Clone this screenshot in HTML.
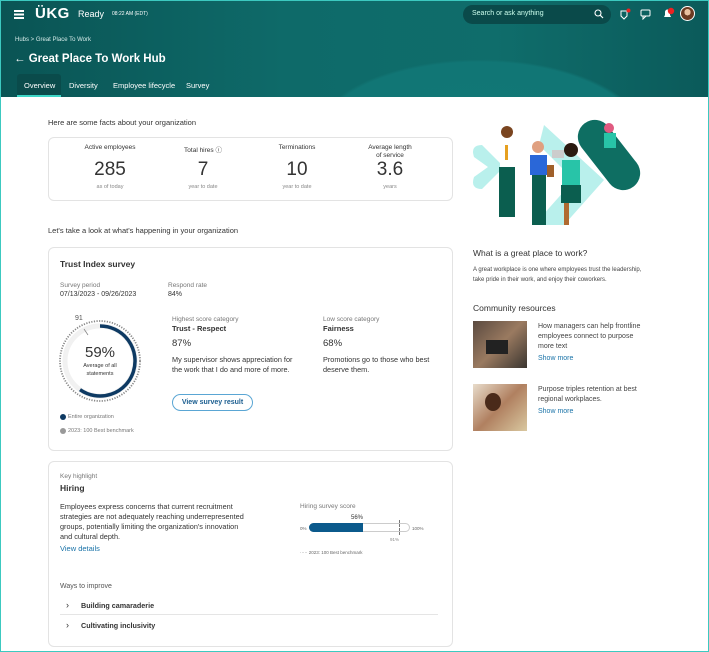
<!DOCTYPE html>
<html><head><meta charset="utf-8"><style>
*{box-sizing:border-box;margin:0;padding:0}
body{width:709px;height:652px;overflow:hidden;font-family:"Liberation Sans",sans-serif;color:#333;background:#fff;position:relative}
.frame{position:absolute;inset:0;border:1px solid #3cc9c0;pointer-events:none;z-index:9}
.hdr{position:absolute;left:0;top:0;width:709px;height:97px;background:radial-gradient(ellipse 270px 130px at 480px 140px,#117876 0%,#117675 60%,transparent 62%),linear-gradient(90deg,#0a5454 0%,#0e6a69 40%,#0f6d6b 70%,#0b5a5a 100%);color:#fff}
.a{position:absolute;white-space:nowrap}
.card{position:absolute;border:1px solid #e3e3e3;border-radius:6px;background:#fff}
.lbl{font-size:6.5px;color:#777}
.b{font-weight:bold}
.link{color:#1a73a8}
</style></head><body>
<div class="frame"></div>
<div class="hdr">
 <div class="a" style="left:14px;top:10px;width:10px;height:1.6px;background:#fff;box-shadow:0 3.5px 0 #fff,0 7px 0 #fff"></div>
 <div class="a b" style="left:35px;top:5px;font-size:15px;letter-spacing:0.5px">ÜKG</div>
 <div class="a" style="left:78px;top:9px;font-size:9px">Ready</div>
 <div class="a" style="left:112px;top:11px;font-size:5px">08:22 AM (EDT)</div>
 <div class="a" style="left:463px;top:5px;width:148px;height:19px;border-radius:10px;background:#0a4a4a"></div>
 <div class="a" style="left:472px;top:10px;font-size:7px;color:#cfe">Search or ask anything</div>
 <svg class="a" style="left:594px;top:9px" width="10" height="10" viewBox="0 0 10 10"><circle cx="4" cy="4" r="3" fill="none" stroke="#fff" stroke-width="1.1"/><path d="M6.2 6.2L9 9" stroke="#fff" stroke-width="1.2"/></svg>
 <svg class="a" style="left:619px;top:8px" width="12" height="12" viewBox="0 0 12 12"><path d="M2 3h6v5l-3 3-3-3z" fill="none" stroke="#fff" stroke-width="1"/><circle cx="9.5" cy="2.5" r="2" fill="#e22"/></svg>
 <svg class="a" style="left:640px;top:9px" width="12" height="11" viewBox="0 0 12 11"><rect x="1" y="1" width="9" height="6" rx="1" fill="none" stroke="#fff"/><path d="M3 7v3l3-3" fill="none" stroke="#fff"/></svg>
 <svg class="a" style="left:661px;top:7px" width="14" height="14" viewBox="0 0 14 14"><path d="M3 10h7l-1-2V5a2.5 2.5 0 0 0-5 0v3z" fill="#fff"/><circle cx="10" cy="4" r="3.2" fill="#e22"/></svg>
 <div class="a" style="left:680px;top:6px;width:15px;height:15px;border-radius:50%;background:radial-gradient(circle at 50% 40%,#e8c0a0 0 30%,#6b3a22 32%);border:1px solid #fff"></div>
 <div class="a" style="left:15px;top:37px;font-size:6px;color:#d7ecea">Hubs &gt; Great Place To Work</div>
 <div class="a b" style="left:14px;top:53px;font-size:11.5px">← Great Place To Work Hub</div>
 <div class="a" style="left:17px;top:74px;width:44px;height:23px;background:#0a4b4b;border-radius:3px 3px 0 0;border-bottom:2px solid #3dd6c6"></div>
 <div class="a" style="left:24px;top:81px;font-size:7.5px">Overview</div>
 <div class="a" style="left:69px;top:81px;font-size:7.5px">Diversity</div>
 <div class="a" style="left:113px;top:81px;font-size:7.5px">Employee lifecycle</div>
 <div class="a" style="left:186px;top:81px;font-size:7.5px">Survey</div>
</div>

<div class="a" style="left:48px;top:118px;font-size:7.5px">Here are some facts about your organization</div>
<div class="card" style="left:48px;top:137px;width:405px;height:64px"></div>
<div class="a" style="left:70px;top:144px;width:80px;text-align:center;font-size:6.5px">Active employees</div>
<div class="a" style="left:70px;top:159px;width:80px;text-align:center;font-size:19px">285</div>
<div class="a" style="left:70px;top:184px;width:80px;text-align:center;font-size:5.5px;color:#888">as of today</div>
<div class="a" style="left:163px;top:144px;width:80px;text-align:center;font-size:6.5px">Total hires ⓘ</div>
<div class="a" style="left:163px;top:159px;width:80px;text-align:center;font-size:19px">7</div>
<div class="a" style="left:163px;top:184px;width:80px;text-align:center;font-size:5.5px;color:#888">year to date</div>
<div class="a" style="left:257px;top:144px;width:80px;text-align:center;font-size:6.5px">Terminations</div>
<div class="a" style="left:257px;top:159px;width:80px;text-align:center;font-size:19px">10</div>
<div class="a" style="left:257px;top:184px;width:80px;text-align:center;font-size:5.5px;color:#888">year to date</div>
<div class="a" style="left:350px;top:144px;width:80px;text-align:center;font-size:6.5px;white-space:normal;line-height:8px">Average length<br>of service</div>
<div class="a" style="left:350px;top:159px;width:80px;text-align:center;font-size:19px">3.6</div>
<div class="a" style="left:350px;top:184px;width:80px;text-align:center;font-size:5.5px;color:#888">years</div>

<div class="a" style="left:48px;top:226px;font-size:7.5px">Let's take a look at what's happening in your organization</div>

<div class="card" style="left:48px;top:247px;width:405px;height:204px"></div>
<div class="a b" style="left:60px;top:259px;font-size:8.5px">Trust Index survey</div>
<div class="a lbl" style="left:60px;top:282px">Survey period</div>
<div class="a" style="left:60px;top:291px;font-size:7px">07/13/2023 - 09/26/2023</div>
<div class="a lbl" style="left:168px;top:282px">Respond rate</div>
<div class="a" style="left:168px;top:291px;font-size:7px">84%</div>
<svg class="a" style="left:55px;top:315px" width="90" height="92" viewBox="0 0 90 92">
 <circle cx="45" cy="46" r="35" fill="none" stroke="#f1f1f1" stroke-width="5"/>
 <circle cx="45" cy="46" r="40" fill="none" stroke="#888" stroke-width="1.8" stroke-dasharray="1.2 1.4"/>
 <path d="M45 11 A35 35 0 1 1 25 74.7" fill="none" stroke="#0e3a63" stroke-width="3.5"/>
 <path d="M29 14 L33 20" stroke="#888" stroke-width="0.8"/>
</svg>
<div class="a" style="left:75px;top:315px;font-size:7px;color:#555">91</div>
<div class="a" style="left:70px;top:344px;width:60px;text-align:center;font-size:15px">59%</div>
<div class="a" style="left:70px;top:362px;width:60px;text-align:center;font-size:5.5px;line-height:8px;white-space:normal">Average of all statements</div>
<div class="a" style="left:60px;top:414px;width:6px;height:6px;border-radius:50%;background:#0e3a63"></div>
<div class="a lbl" style="left:68px;top:414px;font-size:5.5px">Entire organization</div>
<div class="a" style="left:60px;top:428px;width:6px;height:6px;border-radius:50%;background:#999"></div>
<div class="a lbl" style="left:68px;top:428px;font-size:5.5px">2023: 100 Best benchmark</div>

<div class="a lbl" style="left:172px;top:316px">Highest score category</div>
<div class="a b" style="left:172px;top:324px;font-size:7.5px">Trust - Respect</div>
<div class="a" style="left:172px;top:338px;font-size:9.5px">87%</div>
<div class="a" style="left:172px;top:355px;font-size:7.3px;line-height:10px">My supervisor shows appreciation for<br>the work that I do and more of more.</div>
<div class="a" style="left:172px;top:394px;width:81px;height:17px;border:1px solid #5aa6d4;border-radius:9px;text-align:center;font-size:7px;line-height:15px;color:#1a5d8f;font-weight:bold">View survey result</div>
<div class="a lbl" style="left:323px;top:316px">Low score category</div>
<div class="a b" style="left:323px;top:324px;font-size:7.5px">Fairness</div>
<div class="a" style="left:323px;top:338px;font-size:9.5px">68%</div>
<div class="a" style="left:323px;top:355px;font-size:7.3px;line-height:10px">Promotions go to those who best<br>deserve them.</div>

<div class="card" style="left:48px;top:461px;width:405px;height:186px"></div>
<div class="a lbl" style="left:60px;top:473px">Key highlight</div>
<div class="a b" style="left:60px;top:483px;font-size:8.5px">Hiring</div>
<div class="a" style="left:60px;top:502px;font-size:7.3px;line-height:10px">Employees express concerns that current recruitment<br>strategies are not adequately reaching underrepresented<br>groups, potentially limiting the organization's innovation<br>and cultural depth.</div>
<div class="a link" style="left:60px;top:544px;font-size:7.5px">View details</div>
<div class="a lbl" style="left:300px;top:503px">Hiring survey score</div>
<div class="a" style="left:351px;top:515px;font-size:6px">56%</div>
<div class="a" style="left:300px;top:526px;font-size:4.5px;color:#666">0%</div>
<div class="a" style="left:309px;top:523px;width:101px;height:9px;border:1px solid #ccc;border-radius:5px;background:#fff"></div>
<div class="a" style="left:309px;top:523px;width:54px;height:9px;border-radius:5px 0 0 5px;background:#0b5a8c"></div>
<div class="a" style="left:399px;top:520px;height:15px;border-left:1px dashed #777"></div>
<div class="a" style="left:412px;top:526px;font-size:4.5px;color:#666">100%</div>
<div class="a" style="left:390px;top:537px;font-size:4.5px;color:#888">91%</div>
<div class="a" style="left:300px;top:550px;font-size:4.5px;color:#666">····· 2023: 100 Best benchmark</div>
<div class="a" style="left:60px;top:583px;font-size:7px;color:#555">Ways to improve</div>
<div class="a" style="left:66px;top:600px;font-size:9px">›</div>
<div class="a b" style="left:81px;top:601px;font-size:7.2px">Building camaraderie</div>
<div class="a" style="left:60px;top:614px;width:378px;border-top:1px solid #e5e5e5"></div>
<div class="a" style="left:66px;top:620px;font-size:9px">›</div>
<div class="a b" style="left:81px;top:621px;font-size:7.2px">Cultivating inclusivity</div>

<svg class="a" style="left:464px;top:105px" width="180" height="130" viewBox="0 0 180 130">
 <path d="M18 40 L40 62 L18 84 Q6 84 10 72 L24 62 L10 52 Q6 40 18 40z" fill="#b9f0ec"/>
 <path d="M80 20 L140 75 L100 120 L70 120 L110 75 L75 40z" fill="#b9f0ec"/>
 <rect x="128" y="10" width="34" height="80" rx="17" transform="rotate(-38 145 50)" fill="#0e6e62"/>
 <rect x="36" y="40" width="14" height="25" fill="#fff"/><rect x="35" y="62" width="16" height="50" fill="#0b5e4f"/>
 <circle cx="43" cy="27" r="6" fill="#7a4520"/><rect x="41" y="40" width="3" height="15" fill="#e6a020"/>
 <rect x="66" y="50" width="17" height="20" fill="#2a67d8"/><rect x="68" y="70" width="14" height="50" fill="#0b5e4f"/>
 <circle cx="74" cy="42" r="6" fill="#e0a080"/><rect x="83" y="60" width="7" height="12" fill="#a0602a"/>
 <rect x="98" y="55" width="18" height="25" fill="#28c4a8"/><rect x="97" y="80" width="20" height="18" fill="#0b5e4f"/>
 <circle cx="107" cy="45" r="7" fill="#2a1a10"/><rect x="88" y="45" width="12" height="8" fill="#ccc"/>
 <rect x="100" y="98" width="5" height="22" fill="#b06a30"/>
 <circle cx="145" cy="23" r="5" fill="#e05a80"/><rect x="140" y="28" width="12" height="15" fill="#28c4a8"/>
</svg>

<div class="a" style="left:473px;top:248px;font-size:8.5px">What is a great place to work?</div>
<div class="a" style="left:473px;top:266px;font-size:6px;line-height:9.5px;color:#444">A great workplace is one where employees trust the leadership,<br>take pride in their work, and enjoy their coworkers.</div>
<div class="a" style="left:473px;top:303px;font-size:8.5px">Community resources</div>
<div class="a" style="left:473px;top:321px;width:54px;height:47px;background:linear-gradient(135deg,#5a4a40,#9a7a60 50%,#3a3530);"></div>
<div class="a" style="left:486px;top:340px;width:22px;height:14px;background:#222"></div>
<div class="a" style="left:538px;top:322px;font-size:7px;line-height:10px;color:#444">How managers can help frontline<br>employees connect to purpose<br>more text</div>
<div class="a link" style="left:538px;top:355px;font-size:7px">Show more</div>
<div class="a" style="left:473px;top:384px;width:54px;height:47px;background:linear-gradient(135deg,#e8dccb,#b08060 50%,#d9c8a0);"></div>
<div class="a" style="left:485px;top:393px;width:16px;height:18px;border-radius:50%;background:#4a2a1a"></div>
<div class="a" style="left:538px;top:385px;font-size:7px;line-height:10px;color:#444">Purpose triples retention at best<br>regional workplaces.</div>
<div class="a link" style="left:538px;top:408px;font-size:7px">Show more</div>
</body></html>
